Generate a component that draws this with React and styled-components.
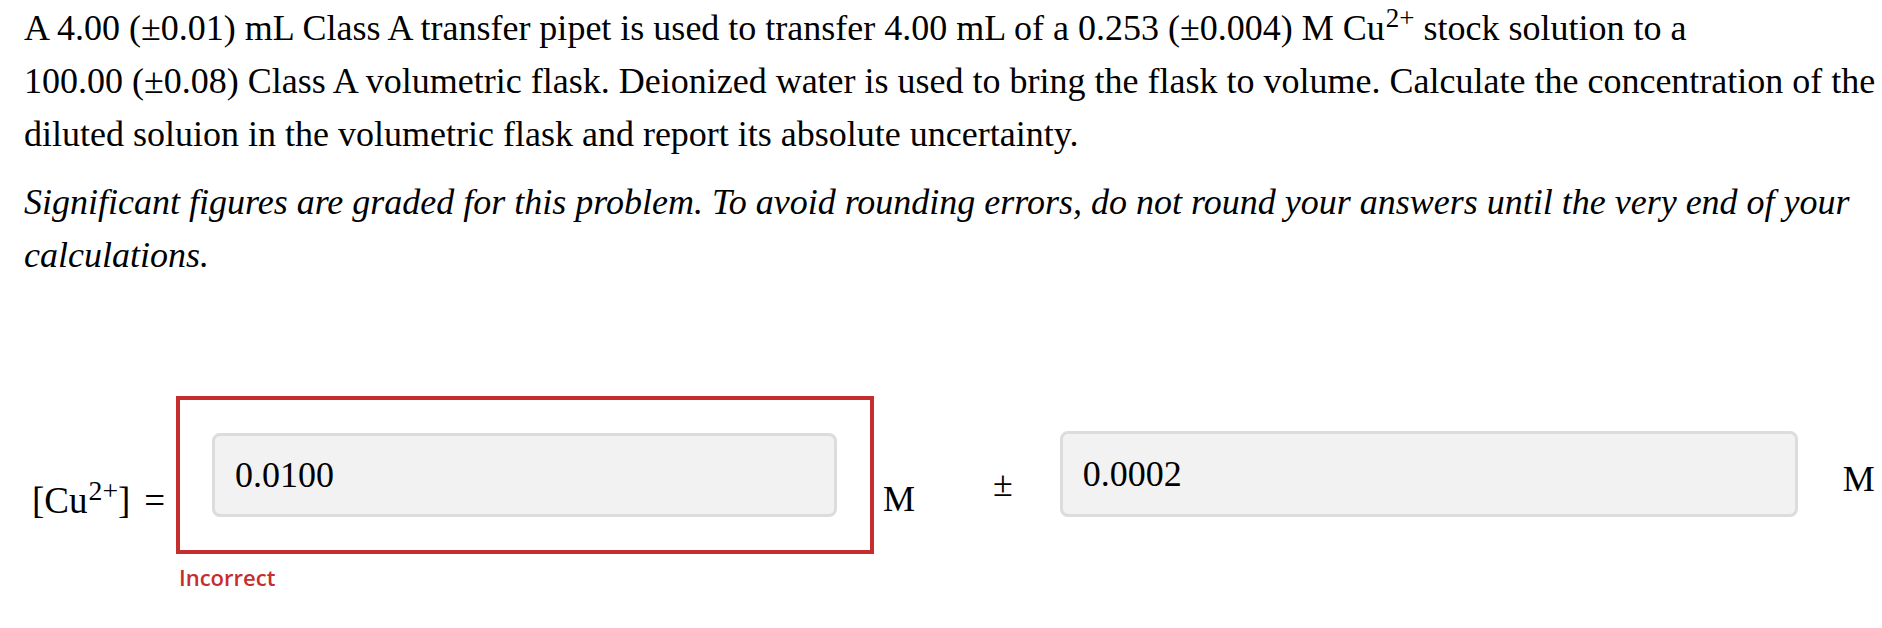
import { createGlobalStyle, styled } from "styled-components";

const GlobalStyle = createGlobalStyle`
    html, body {
        margin: 0;
        padding: 0;
        background: #FFFFFF;
    }
    body {
        font-family: "Liberation Serif", "Times New Roman", serif;
        color: #000000;
    }
`;

const StyledQuestion = styled.div`
    width: 1882px;
    box-sizing: border-box;
    padding: 2px 0 0 24px;
    font-size: 36px;

    sup{
        font-size: 0.75em;
        line-height: 0;
        vertical-align: 0.48em;
        margin-left: 1px;
    }
`;

const Prompt = styled.p`
    margin: 0;
    line-height: 53px;
    white-space: nowrap;
    font-style: ${(p) => (p.$italic ? "italic" : "normal")};
    margin-top: ${(p) => p.$gap || 0}px;
`;

const AnswerRow = styled.div`
    display: flex;
    align-items: flex-start;
    margin-top: 114px;
`;

const Label = styled.span`
    display: block;
    width: 144px;
    margin-left: 8px;
    margin-top: ${(p) => p.$offset}px;
    font-size: 37px;
    line-height: 40px;
    white-space: nowrap;

    .eq{
        margin-left: 14px;
    }
`;

const FieldGroup = styled.div`
    display: flex;
    flex-direction: column;
`;

const MarkedBox = styled.div`
    width: 698px;
    height: 158px;
    box-sizing: border-box;
    border: 4px solid #C62D2D;
    padding: 33px 33px 33px 32px;
`;

const AnswerInput = styled.div`
    width: ${(p) => p.$width}px;
    height: ${(p) => p.$height || 84}px;
    box-sizing: border-box;
    border: 3px solid #DCDCDC;
    border-radius: 8px;
    background: #F2F2F2;
    padding-left: 20px;
    display: flex;
    align-items: center;
    font-size: 36px;
    margin-top: ${(p) => p.$offset || 0}px;
    margin-left: ${(p) => p.$left || 0}px;
`;

const Feedback = styled.span`
    margin: 8px 0 0 3px;
    font-family: "Open Sans", "Noto Sans", sans-serif;
    font-weight: 600;
    font-size: 22px;
    line-height: 30px;
    color: #C62D2D;
`;

const Unit = styled.span`
    display: block;
    line-height: 40px;
    margin-top: ${(p) => p.$offset}px;
    margin-left: ${(p) => p.$left}px;
`;

export default function App() {
    return <>
        <GlobalStyle />
        <StyledQuestion>
            <Prompt>
                A 4.00 (±0.01) mL Class A transfer pipet is used to transfer 4.00 mL of a 0.253 (±0.004) M Cu<sup>2+</sup> stock solution to a<br />
                100.00 (±0.08) Class A volumetric flask. Deionized water is used to bring the flask to volume. Calculate the concentration of the<br />
                diluted soluion in the volumetric flask and report its absolute uncertainty.
            </Prompt>
            <Prompt $italic $gap={15}>
                Significant figures are graded for this problem. To avoid rounding errors, do not round your answers until the very end of your<br />
                calculations.
            </Prompt>

            <AnswerRow>
                <Label $offset={85}>
                    [Cu<sup>2+</sup>]<span className="eq">=</span>
                </Label>
                <FieldGroup>
                    <MarkedBox>
                        <AnswerInput $width={625}>0.0100</AnswerInput>
                    </MarkedBox>
                    <Feedback>Incorrect</Feedback>
                </FieldGroup>
                <Unit $offset={83} $left={9}>M</Unit>
                <Unit $offset={68} $left={78}>±</Unit>
                <AnswerInput $width={738} $height={86} $offset={35} $left={47}>0.0002</AnswerInput>
                <Unit $offset={63} $left={45}>M</Unit>
            </AnswerRow>
        </StyledQuestion>
    </>
}
